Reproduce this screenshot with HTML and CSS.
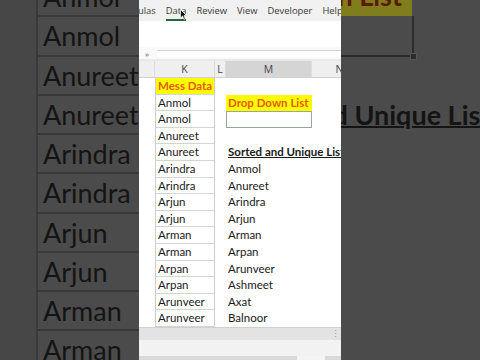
FILE: index.html
```html
<!DOCTYPE html>
<html lang="en">
<head>
  <meta charset="UTF-8">
  <meta name="viewport" content="width=device-width, initial-scale=1.0">
  <title>Drop Down List - Sorted and Unique</title>
  <link rel="stylesheet" href="styles.css">
</head>
<body>
  <div class="frame">

    <!-- zoomed copy of column K, darkened -->
    <div class="zoom zoom-left">
      <div class="zl-gutter"></div>
      <div class="zl-cells">
        <div class="zl-cell">Anmol</div>
        <div class="zl-cell">Anmol</div>
        <div class="zl-cell">Anureet</div>
        <div class="zl-cell">Anureet</div>
        <div class="zl-cell">Arindra</div>
        <div class="zl-cell">Arindra</div>
        <div class="zl-cell">Arjun</div>
        <div class="zl-cell">Arjun</div>
        <div class="zl-cell">Arman</div>
        <div class="zl-cell">Arman</div>
      </div>
    </div>

    <div class="sheet">
      <div class="tabs">
        <span class="first">Formulas</span>
        <span class="active">Data</span>
        <span>Review</span>
        <span>View</span>
        <span>Developer</span>
        <span>Help</span>
        <svg class="cursor" width="7" height="11" viewBox="0 0 7 11">
          <path d="M0.5 0.5 L0.5 9 L2.6 7 L4 10.4 L5.3 9.8 L4 6.6 L6.6 6.6 Z" fill="#111" stroke="#fff" stroke-width="0.7"/>
        </svg>
      </div>
      <div class="ribbon"></div>
      <div class="formula">
        <span class="fx">&raquo;</span>
        <div class="fx-input"></div>
      </div>

      <div class="grid">
        <div class="row head">
          <div class="c g"></div>
          <div class="c k">K</div>
          <div class="c l">L</div>
          <div class="c m sel">M</div>
          <div class="c n">N</div>
        </div>
        <div class="row">
          <div class="c g"></div><div class="c k yellow">Mess Data</div><div class="c l"></div><div class="c m"></div>
        </div>
        <div class="row">
          <div class="c g"></div><div class="c k">Anmol</div><div class="c l"></div><div class="c m yellow">Drop Down List</div>
        </div>
        <div class="row">
          <div class="c g"></div><div class="c k">Anmol</div><div class="c l"></div><div class="c m picked"></div>
        </div>
        <div class="row">
          <div class="c g"></div><div class="c k">Anureet</div><div class="c l"></div><div class="c m"></div>
        </div>
        <div class="row">
          <div class="c g"></div><div class="c k">Anureet</div><div class="c l"></div><div class="c m title">Sorted and Unique List</div>
        </div>
        <div class="row">
          <div class="c g"></div><div class="c k">Arindra</div><div class="c l"></div><div class="c m">Anmol</div>
        </div>
        <div class="row">
          <div class="c g"></div><div class="c k">Arindra</div><div class="c l"></div><div class="c m">Anureet</div>
        </div>
        <div class="row">
          <div class="c g"></div><div class="c k">Arjun</div><div class="c l"></div><div class="c m">Arindra</div>
        </div>
        <div class="row">
          <div class="c g"></div><div class="c k">Arjun</div><div class="c l"></div><div class="c m">Arjun</div>
        </div>
        <div class="row">
          <div class="c g"></div><div class="c k">Arman</div><div class="c l"></div><div class="c m">Arman</div>
        </div>
        <div class="row">
          <div class="c g"></div><div class="c k">Arman</div><div class="c l"></div><div class="c m">Arpan</div>
        </div>
        <div class="row">
          <div class="c g"></div><div class="c k">Arpan</div><div class="c l"></div><div class="c m">Arunveer</div>
        </div>
        <div class="row">
          <div class="c g"></div><div class="c k">Arpan</div><div class="c l"></div><div class="c m">Ashmeet</div>
        </div>
        <div class="row">
          <div class="c g"></div><div class="c k">Arunveer</div><div class="c l"></div><div class="c m">Axat</div>
        </div>
        <div class="row">
          <div class="c g"></div><div class="c k">Arunveer</div><div class="c l"></div><div class="c m">Balnoor</div>
        </div>
      </div>

      <div class="hscroll"><span class="grip">&#8942;</span></div>
      <div class="status"></div>
      <div class="foot"><div class="foot-btn"></div></div>
    </div>

    <!-- zoomed copy of column M, darkened -->
    <div class="zoom zoom-right">
      <div class="zr-yellow"><span>Drop Down List</span></div>
      <div class="zr-box"><span class="handle"></span></div>
      <div class="zr-gap"></div>
      <div class="zr-title">Sorted and Unique List</div>
    </div>

  </div>
</body>
</html>
```

FILE: styles.css
```css
:root {
  --dim-bg: #4b4b4b;
  --dim-line: #393939;
  --dim-text: #141414;
  --cell-font: 'Lato', 'Liberation Sans', sans-serif;
  --ui-font: 'Open Sans', 'Noto Sans', sans-serif;
}

* {
  box-sizing: border-box;
}

html, body {
  margin: 0;
}

body {
  width: 480px;
  height: 360px;
  overflow: hidden;
  background: var(--dim-bg);
  font-family: var(--cell-font);
}

.frame {
  display: flex;
  height: 360px;
}

/* darkened zoom panels */
.zoom {
  width: 139px;
  flex: none;
  overflow: hidden;
  background: var(--dim-bg);
  color: var(--dim-text);
}

.zoom-left {
  display: flex;
}

.zl-gutter {
  width: 38px;
  flex: none;
  background: #474747;
  border-right: 2px solid var(--dim-line);
}

.zl-cells {
  flex: 1;
  margin-top: -22px;
}

.zl-cell {
  height: 39.25px;
  border-bottom: 2px solid var(--dim-line);
  padding: 3px 0 0 5px;
  font-size: 27px;
  line-height: 32px;
  white-space: nowrap;
}

.zoom-right {
  display: flex;
  flex-direction: column;
}

.zr-yellow {
  width: 71px;
  height: 39px;
  margin-top: -23px;
  flex: none;
  display: flex;
  justify-content: flex-end;
  overflow: hidden;
  padding: 3px 10px 0 0;
  background: #807e1c;
  color: #5a1a02;
  font-size: 27px;
  font-weight: 700;
  line-height: 32px;
  white-space: nowrap;
}

.zr-box {
  position: relative;
  width: 73px;
  height: 41px;
  flex: none;
  border-right: 2px solid #2c2c2c;
  border-bottom: 2px solid #2c2c2c;
}

.zr-box .handle {
  position: absolute;
  right: -5px;
  bottom: -5px;
  width: 7px;
  height: 7px;
  background: #2c2c2c;
  border: 1px solid #555;
}

.zr-gap {
  height: 37px;
  flex: none;
}

.zr-title {
  height: 41px;
  flex: none;
  margin-left: -124px;
  padding-top: 5px;
  font-size: 27px;
  font-weight: 700;
  line-height: 32px;
  text-decoration: underline;
  text-decoration-thickness: 2px;
  white-space: nowrap;
}

/* the real sheet in the middle */
.sheet {
  position: relative;
  width: 202px;
  flex: none;
  display: flex;
  flex-direction: column;
  overflow: hidden;
  background: #fff;
}

.tabs {
  height: 21px;
  flex: none;
  display: flex;
  gap: 10px;
  background: #f1f1f1;
  font-family: var(--ui-font);
  font-size: 9.4px;
  color: #3a3a3a;
  white-space: nowrap;
}

.tabs span {
  padding-top: 3px;
  line-height: 16px;
  border-bottom: 2px solid transparent;
}

.tabs .first {
  margin-left: -24px;
}

.tabs .active {
  border-bottom-color: #1d6b40;
}

.cursor {
  position: absolute;
  left: 41px;
  top: 9px;
}

.ribbon {
  height: 26px;
  flex: none;
  background: #fff;
}

.formula {
  height: 14px;
  flex: none;
  display: flex;
  align-items: center;
  background: #fafafa;
  border-bottom: 2px solid #e9e9e9;
}

.fx {
  width: 18px;
  padding-left: 6px;
  font-family: var(--ui-font);
  font-size: 8px;
  color: #555;
}

.fx-input {
  flex: 1;
  height: 7px;
  border-top: 1px solid #d3d3d3;
  background: #fff;
}

.grid {
  flex: none;
}

.row {
  display: flex;
  height: 16.6px;
}

.c {
  flex: none;
  height: 100%;
  padding-left: 2px;
  font-size: 11.5px;
  line-height: 16px;
  color: #1a1a1a;
  white-space: nowrap;
  overflow: hidden;
}

.g { width: 16px; }
.l { width: 11px; }
.m { width: 86px; overflow: visible; }
.n { width: 56px; }

.k {
  width: 60px;
  border-left: 1px solid #cdcdcd;
  border-right: 1px solid #cdcdcd;
  border-bottom: 1px solid #d4d4d4;
}

.row.head {
  height: 17px;
  background: #efefef;
  border-bottom: 1px solid #d2d2d2;
}

.head .c {
  padding: 0;
  text-align: center;
  font-family: var(--ui-font);
  font-size: 10.5px;
  color: #444;
  border: 0;
  border-right: 1px solid #dcdcdc;
}

.head .sel {
  background: #d5d5d5;
}

.yellow {
  background: #ffff00;
  color: #e8590c;
  font-weight: 700;
}

.picked {
  border: 1px solid #97a89b;
}

.title {
  font-weight: 700;
  text-decoration: underline;
}

.hscroll {
  height: 13px;
  flex: none;
  display: flex;
  justify-content: flex-end;
  background: #e3e3e3;
  border-top: 1px solid #d0d0d0;
}

.grip {
  font-size: 9px;
  line-height: 12px;
  color: #999;
  padding-right: 1px;
}

.status {
  height: 16px;
  flex: none;
  background: #f2f2f2;
}

.foot {
  flex: 1;
  display: flex;
  background: #d9d9d9;
}

.foot-btn {
  width: 28px;
  margin-left: 158px;
  background: #f4f4f4;
}
```
